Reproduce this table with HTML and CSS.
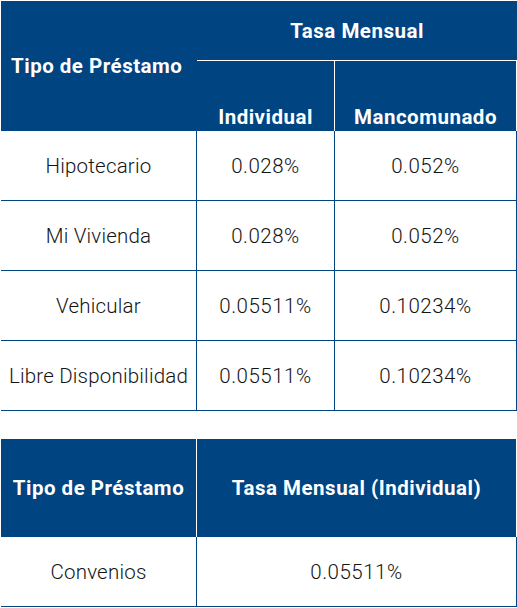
FILE: index.html
```html
<!DOCTYPE html>
<html lang="es">
<head>
<meta charset="utf-8">
<title>Tasas</title>
<link rel="stylesheet" href="styles.css">
</head>
<body>
<table class="rates">
  <colgroup><col class="c1"><col class="c2"><col class="c3"></colgroup>
  <thead>
    <tr>
      <th class="h-tipo" rowspan="2">Tipo de Préstamo</th>
      <th class="h-tasa" colspan="2">Tasa Mensual</th>
    </tr>
    <tr>
      <th class="h-sub h-ind">Individual</th>
      <th class="h-sub h-man">Mancomunado</th>
    </tr>
  </thead>
  <tbody>
    <tr><td>Hipotecario</td><td class="num">0.028%</td><td class="num">0.052%</td></tr>
    <tr><td>Mi Vivienda</td><td class="num">0.028%</td><td class="num">0.052%</td></tr>
    <tr><td>Vehicular</td><td class="num">0.05511%</td><td class="num">0.10234%</td></tr>
    <tr><td>Libre Disponibilidad</td><td class="num">0.05511%</td><td class="num">0.10234%</td></tr>
  </tbody>
</table>

<table class="rates second">
  <colgroup><col class="c1"><col class="c23"></colgroup>
  <thead>
    <tr>
      <th class="h2-tipo">Tipo de Préstamo</th>
      <th class="h2-tasa">Tasa Mensual (Individual)</th>
    </tr>
  </thead>
  <tbody>
    <tr><td>Convenios</td><td class="num">0.05511%</td></tr>
  </tbody>
</table>
</body>
</html>
```

FILE: styles.css
```css
html, body {
  margin: 0;
  padding: 0;
  background: #ffffff;
}

body {
  padding: 1px 0 0 1px;
}

.rates {
  border-collapse: separate;
  border-spacing: 0;
  table-layout: fixed;
  width: 516px;
  font-family: Roboto, "Liberation Sans", sans-serif;
}

.c1 { width: 196px; }
.c2 { width: 138px; }
.c3 { width: 182px; }
.c23 { width: 320px; }

.rates th {
  background: #004481;
  color: #ffffff;
  font-weight: 700;
  font-size: 20.5px;
  letter-spacing: 0.5px;
  padding: 0;
  box-sizing: border-box;
  white-space: nowrap;
}

.h-tipo {
  text-align: left;
  padding-left: 10px !important;
  vertical-align: middle;
  border-right: 1px solid #004481;
}

.h-tasa {
  height: 60px;
  border-bottom: 1px solid #ffffff;
  vertical-align: middle;
}

.h-sub {
  height: 70px;
  vertical-align: bottom;
  padding-bottom: 2px !important;
  border-right: 1px solid #ffffff;
}

.rates td {
  height: 70px;
  box-sizing: border-box;
  padding: 0;
  text-align: center;
  vertical-align: middle;
  font-size: 20.5px;
  font-weight: 300;
  letter-spacing: 0.2px;
  color: #141414;
  border-right: 1px solid #004481;
  border-bottom: 1px solid #004481;
  white-space: nowrap;
}

.rates td.num {
  letter-spacing: 0.5px;
}

.second {
  margin-top: 28px;
}

.h2-tipo,
.h2-tasa {
  height: 98px;
  vertical-align: middle;
  border-right: 1px solid #ffffff;
}
```
